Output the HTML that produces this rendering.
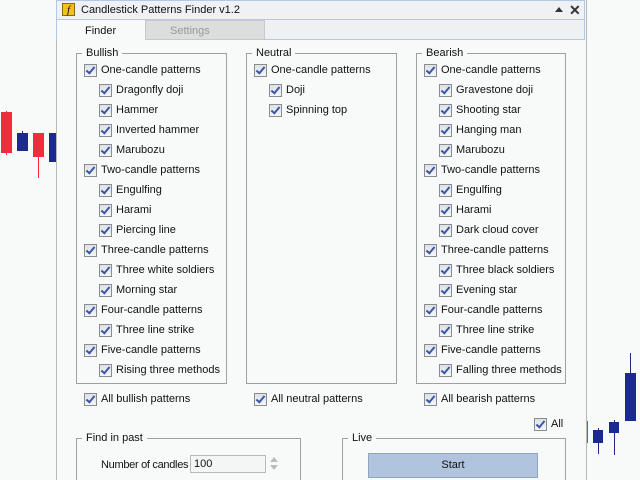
<!DOCTYPE html><html><head><style>
html,body{margin:0;width:640px;height:480px;overflow:hidden}
body{background:#f8f9f9;position:relative;font-family:"Liberation Sans",sans-serif;font-size:11px;color:#111}
.a{position:absolute}
.win{left:56px;top:0;width:529px;height:480px;background:#f8f9f9;border-left:1px solid #b8b8b8;border-right:1px solid #b8b8b8}
.title{left:56px;top:0;width:529px;height:20px;background:#f0f1f2;border:1px solid #b4c8e4;box-sizing:border-box}
.tabs{left:56px;top:20px;width:529px;height:20px;background:#eff0f1;border-bottom:1px solid #bcc8d8;border-left:1px solid #b4c8e4;border-right:1px solid #b4c8e4;box-sizing:border-box}
.grp{border:1px solid #a0a0a0;box-sizing:border-box}
.lg{background:#f8f9f9;padding:0 4px}
.cb{width:11px;height:11px;border:1px solid #8a8c8f;background:linear-gradient(#dde2e8,#f4f5f7)}
.cb:after{content:"";position:absolute;left:3px;top:0px;width:3px;height:7px;border:solid #3c57a2;border-width:0 2px 2px 0;transform:rotate(40deg)}
</style></head><body>
<div class="a" style="left:1px;top:112px;width:11px;height:41px;background:#ee2e3c"></div>
<div class="a" style="left:6px;top:111px;width:1px;height:44px;background:#ee2e3c"></div>
<div class="a" style="left:17px;top:133px;width:11px;height:18px;background:#1b2a8c"></div>
<div class="a" style="left:22px;top:131px;width:1px;height:3px;background:#1b2a8c"></div>
<div class="a" style="left:33px;top:133px;width:11px;height:24px;background:#ee2e3c"></div>
<div class="a" style="left:38px;top:133px;width:1px;height:45px;background:#ee2e3c"></div>
<div class="a" style="left:49px;top:133px;width:8px;height:29px;background:#1b2a8c"></div>
<div class="a" style="left:586px;top:421px;width:2px;height:22px;background:#ee2e3c"></div>
<div class="a" style="left:593px;top:430px;width:10px;height:13px;background:#1b2a8c"></div>
<div class="a" style="left:598px;top:428px;width:1px;height:26px;background:#1b2a8c"></div>
<div class="a" style="left:609px;top:422px;width:10px;height:11px;background:#1b2a8c"></div>
<div class="a" style="left:614px;top:420px;width:1px;height:35px;background:#1b2a8c"></div>
<div class="a" style="left:625px;top:373px;width:11px;height:48px;background:#1b2a8c"></div>
<div class="a" style="left:630px;top:353px;width:1px;height:20px;background:#1b2a8c"></div>

<div class="a win"></div>
<div class="a title"></div>
<div class="a" style="left:62px;top:3px;width:13px;height:13px;background:#f3c21a;border:1px solid #8a6a10;box-sizing:border-box;font:italic 11px 'Liberation Serif',serif;text-align:center;line-height:12px">f</div>
<div class="a" style="left:81px;top:4px;font-size:11px">Candlestick Patterns Finder v1.2</div>
<div class="a" style="left:555px;top:7px;width:0;height:0;border-left:4px solid transparent;border-right:4px solid transparent;border-bottom:5px solid #333"></div>
<div class="a" style="left:569px;top:2px;font-size:14px;font-weight:bold;color:#333">✕</div>
<div class="a tabs"></div>
<div class="a" style="left:57px;top:20px;width:88px;height:21px;background:#f8f9f9"></div>
<div class="a" style="left:85px;top:25px">Finder</div>
<div class="a" style="left:145px;top:20px;width:120px;height:20px;background:#dcdddd;border:1px solid #c8c8c8;box-sizing:border-box"></div>
<div class="a" style="left:170px;top:25px;color:#999">Settings</div>

<div class="a grp" style="left:76px;top:53px;width:151px;height:331px"></div>
<div class="a grp" style="left:246px;top:53px;width:151px;height:331px"></div>
<div class="a grp" style="left:416px;top:53px;width:150px;height:331px"></div>
<div class="a lg" style="left:82px;top:47px">Bullish</div>
<div class="a lg" style="left:252px;top:47px">Neutral</div>
<div class="a lg" style="left:422px;top:47px">Bearish</div>

<div id="items"></div>
<div class="a grp" style="left:76px;top:438px;width:225px;height:50px"></div>
<div class="a lg" style="left:82px;top:432px">Find in past</div>
<div class="a" style="left:101px;top:459px;letter-spacing:-0.3px">Number of candles</div>
<div class="a" style="left:190px;top:455px;width:76px;height:18px;border:1px solid #b8b8b8;background:#f4f5f5;box-sizing:border-box;padding:2px 3px">100</div>
<div class="a" style="left:270px;top:457px;width:0;height:0;border-left:4px solid transparent;border-right:4px solid transparent;border-bottom:5px solid #bbb"></div>
<div class="a" style="left:270px;top:465px;width:0;height:0;border-left:4px solid transparent;border-right:4px solid transparent;border-top:5px solid #bbb"></div>
<div class="a grp" style="left:342px;top:438px;width:224px;height:50px"></div>
<div class="a lg" style="left:348px;top:432px">Live</div>
<div class="a" style="left:368px;top:453px;width:170px;height:25px;background:#b0c4de;border:1px solid #8ea4c4;box-sizing:border-box;text-align:center;line-height:23px">Start</div>
<script>
var cols=[[84,["1One-candle patterns","2Dragonfly doji","2Hammer","2Inverted hammer","2Marubozu","1Two-candle patterns","2Engulfing","2Harami","2Piercing line","1Three-candle patterns","2Three white soldiers","2Morning star","1Four-candle patterns","2Three line strike","1Five-candle patterns","2Rising three methods"]],
[254,["1One-candle patterns","2Doji","2Spinning top"]],
[424,["1One-candle patterns","2Gravestone doji","2Shooting star","2Hanging man","2Marubozu","1Two-candle patterns","2Engulfing","2Harami","2Dark cloud cover","1Three-candle patterns","2Three black soldiers","2Evening star","1Four-candle patterns","2Three line strike","1Five-candle patterns","2Falling three methods"]]];
var h="";
function cb(x,y,t){h+='<div class="a cb" style="left:'+x+'px;top:'+y+'px"></div><div class="a" style="left:'+(x+17)+'px;top:'+(y)+'px">'+t+'</div>';}
cols.forEach(function(c){c[1].forEach(function(s,i){var x=c[0]+(s[0]=="2"?15:0);cb(x,64+i*20,s.slice(1));});});
cb(84,393,"All bullish patterns");cb(254,393,"All neutral patterns");cb(424,393,"All bearish patterns");cb(534,418,"All");
document.getElementById("items").innerHTML=h;
</script>
</body></html>
